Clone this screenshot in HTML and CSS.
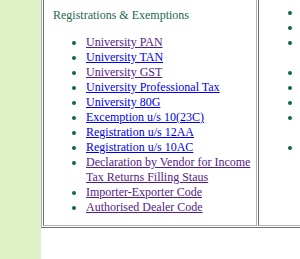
FILE: index.html
```html
<!DOCTYPE html>
<html lang="en">

<head>
    <meta charset="UTF-8">
    <meta name="viewport" content="width=device-width, initial-scale=1.0">
    <title>Registrations</title>
    <link rel="stylesheet" href="styles.css">
</head>

<body>
    <div class="page">
        <div class="sidebar"></div>
        <div class="main">
            <table class="links-table">
                <tr>
                    <td class="cell cell-left">
                        <p class="cell-title">Registrations &amp; Exemptions</p>
                        <ul class="link-list">
                            <li><a href="#" class="visited">University PAN</a></li>
                            <li><a href="#">University TAN</a></li>
                            <li><a href="#" class="visited">University GST</a></li>
                            <li><a href="#">University Professional Tax</a></li>
                            <li><a href="#">University 80G</a></li>
                            <li><a href="#">Excemption u/s 10(23C)</a></li>
                            <li><a href="#">Registration u/s 12AA</a></li>
                            <li><a href="#">Registration u/s 10AC</a></li>
                            <li><a href="#" class="visited">Declaration by Vendor for Income Tax Returns Filling Staus</a></li>
                            <li><a href="#" class="visited">Importer-Exporter Code</a></li>
                            <li><a href="#" class="visited">Authorised Dealer Code</a></li>
                        </ul>
                    </td>
                    <td class="cell cell-right">
                        <ul class="link-list link-list-right">
                            <li><a href="#">Annual Report</a></li>
                            <li><a href="#">Audited Accounts</a></li>
                            <li><a href="#">Statement of Income and Expenditure 2016-17</a></li>
                            <li><a href="#">Budget Estimates</a></li>
                            <li><a href="#">Tender Notices</a></li>
                            <li><a href="#">Fee Structure</a></li>
                            <li><a href="#">Minutes of the Finance Committee Meetings</a></li>
                            <li><a href="#">Contact Us</a></li>
                        </ul>
                    </td>
                </tr>
            </table>
        </div>
    </div>
</body>

</html>
```

FILE: styles.css
```css
html,
body {
    margin: 0;
    padding: 0;
    background: #fff;
}

.page {
    display: flex;
    width: 300px;
    height: 259px;
    overflow: hidden;
    font-family: "Liberation Serif", "Times New Roman", serif;
    font-size: 12px;
    line-height: 15px;
}

.sidebar {
    flex: none;
    width: 41px;
    background: #dff1c6;
}

.main {
    flex: none;
}

.links-table {
    margin-top: -10px;
    border: 1px solid;
    border-color: #b4b4b4 #707070 #707070 #b4b4b4;
    border-spacing: 1px;
}

.cell {
    vertical-align: top;
    border: 1px solid;
    border-color: #707070 #b4b4b4 #b4b4b4 #707070;
    padding: 12px 2px 10px 9px;
}

.cell-left {
    width: 201px;
}

.cell-right {
    width: 180px;
}

.cell-title {
    margin: 3px 0 12px;
    color: #1a6b48;
}

.link-list {
    margin: 0;
    padding-left: 33px;
    color: #0e6b3a;
}

.link-list-right {
    padding-left: 34px;
}

.link-list a {
    color: #0000ee;
}

.link-list a.visited {
    color: #551a8b;
}
```
